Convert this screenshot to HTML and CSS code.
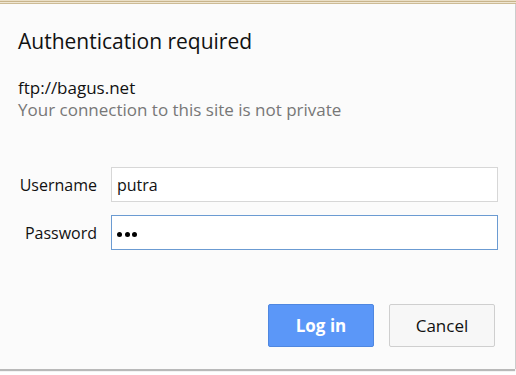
FILE: index.html
```html
<!DOCTYPE html>
<html>
<head>
<meta charset="utf-8">
<link rel="stylesheet" href="styles.css">
</head>
<body>
<div class="topbar"></div>
<div class="dialog">
  <h1 class="title">Authentication required</h1>
  <div class="site">ftp://bagus.net</div>
  <div class="note">Your connection to this site is not private</div>
  <form class="form">
    <label class="label" for="u">Username</label>
    <input class="field" id="u" type="text" value="putra">
    <label class="label" for="p">Password</label>
    <div class="field focused" id="p"><span class="dot"></span><span class="dot"></span><span class="dot"></span></div>
  </form>
  <div class="actions">
    <button class="btn primary" type="button">Log in</button>
    <button class="btn" type="button">Cancel</button>
  </div>
</div>
</body>
</html>
```
FILE: styles.css
```css
html, body {
  margin: 0;
  padding: 0;
  background: #ffffff;
}
body {
  width: 516px;
  height: 375px;
  overflow: hidden;
  font-family: "Open Sans", "Noto Sans", sans-serif;
  color: #111;
}
.topbar {
  height: 4px;
  width: 516px;
  background: linear-gradient(#eadfc6 0 1px, #c8b48c 1px 2px, #efe6d2 2px 3px, #cdbb95 3px 4px);
}
.dialog {
  width: 515px;
  height: 365px;
  box-sizing: border-box;
  background: #fbfbfb;
  box-shadow: 0 2px 1px #b9b9b9, 1px 0 0 #d0d0d0;
  padding: 24px 17px 0 18px;
  display: flex;
  flex-direction: column;
}
.title {
  margin: 0;
  font-size: 21px;
  font-weight: 400;
  line-height: 26px;
  color: #111;
}
.site {
  margin-top: 23px;
  font-size: 17px;
  line-height: 22px;
  color: #111;
}
.note {
  font-size: 17px;
  line-height: 22px;
  color: #777;
}
.form {
  margin: 46px 0 0 0;
  display: grid;
  grid-template-columns: 79px 1fr;
  column-gap: 14px;
  row-gap: 13px;
  align-items: center;
}
.label {
  text-align: right;
  font-size: 16px;
  color: #111;
  white-space: nowrap;
}
.field {
  box-sizing: border-box;
  height: 35px;
  width: 100%;
  margin: 0;
  border: 1px solid #d7d7d7;
  background: #fff;
  padding: 0 0 0 5px;
  font-family: inherit;
  font-size: 16px;
  color: #111;
  outline: none;
  display: flex;
  align-items: center;
}
.focused {
  border-color: #6b9bd2;
  gap: 2.5px;
  padding-top: 3px;
}
.dot {
  width: 5px;
  height: 5px;
  border-radius: 50%;
  background: #000;
}
.actions {
  margin-top: 54px;
  display: flex;
  justify-content: flex-end;
  gap: 15px;
  padding-right: 3px;
}
.btn {
  box-sizing: border-box;
  width: 106px;
  height: 43px;
  border: 1px solid #cfcfcf;
  border-radius: 2px;
  background: #f7f7f7;
  font-family: inherit;
  font-size: 17px;
  color: #111;
  padding: 0;
}
.primary {
  background: #5b97f8;
  border-color: #4f87e0;
  color: #fff;
  font-weight: 700;
}
```
